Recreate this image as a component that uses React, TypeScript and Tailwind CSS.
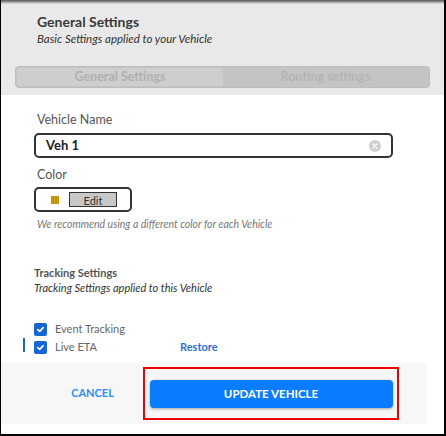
import React from "react";

export default function App() {
  const font = { fontFamily: "Lato, 'Open Sans', sans-serif" };
  return (
    <div
      className="w-[446px] h-[436px] bg-white border-l border-r-2 border-b-2 border-black flex flex-col overflow-hidden"
      style={font}
    >
      {/* Header */}
      <div className="h-[95px] bg-[#e9e9e9] flex flex-col relative">
        <div className="h-[4px] bg-gradient-to-b from-[#555] to-[#e9e9e9]" />
        <div className="pl-[36px] pt-[9px]">
          <div className="text-[14px] leading-[18px] font-bold text-[#3a3a3a]">General Settings</div>
          <div className="text-[11.5px] leading-[14px] italic text-[#333] mt-[1px]">
            Basic Settings applied to your Vehicle
          </div>
        </div>
        <div className="mx-[14px] mt-[20px] h-[22px] rounded-[4px] bg-[#c4c4c4] border border-[#bdbdbd] flex p-[1px]">
          <div className="w-[206px] rounded-[3px] bg-[#cecece] flex items-center justify-center text-[12.5px] font-bold text-[#b0b0b0]">
            General Settings
          </div>
          <div className="flex-1 flex items-center justify-center text-[12.5px] font-bold text-[#b4b4b4]">
            Routing settings
          </div>
        </div>
      </div>

      {/* Body */}
      <div className="flex-1 flex flex-col pl-[33px]">
        <div className="mt-[17px] pl-[3px] text-[12.5px] leading-[16px] text-[#555]">Vehicle Name</div>
        <div className="mt-[5px] w-[359px] h-[25px] border-2 border-[#333] rounded-[5px] flex items-center pl-[10px] pr-[10px]">
          <span className="text-[13px] font-bold text-[#222] flex-1">Veh 1</span>
          <span className="w-[12px] h-[12px] rounded-full bg-[#cfcfcf] flex items-center justify-center">
            <svg width="6" height="6" viewBox="0 0 6 6">
              <path d="M1 1L5 5M5 1L1 5" stroke="white" strokeWidth="1.4" strokeLinecap="round" />
            </svg>
          </span>
        </div>
        <div className="mt-[9px] pl-[3px] text-[12.5px] leading-[16px] text-[#555]">Color</div>
        <div className="mt-[4px] w-[98px] h-[25px] border-2 border-[#333] rounded-[5px] flex items-center pl-[15px]">
          <span className="w-[8px] h-[8px] bg-[#c4960c]" />
          <span className="ml-[10px] w-[48px] h-[15px] bg-[#c8c8c8] border border-[#333] flex items-center justify-center text-[11px] leading-none text-[#333] pt-[2px]">
            Edit
          </span>
        </div>
        <div className="mt-[6px] pl-[3px] text-[10.5px] leading-[13px] italic text-[#777]">
          We recommend using a different color for each Vehicle
        </div>

        <div className="mt-[35px] text-[11px] leading-[13px] font-bold text-[#555]">Tracking Settings</div>
        <div className="mt-[2px] text-[11px] leading-[14px] italic text-[#333]">
          Tracking Settings applied to this Vehicle
        </div>

        <div className="mt-[26px] flex items-center h-[16px]">
          <Check />
          <span className="ml-[8px] text-[11px] text-[#666]">Event Tracking</span>
        </div>
        <div className="mt-[2px] flex items-center h-[16px] relative">
          <span className="absolute left-[-11px] top-[-1px] w-[2px] h-[14px] bg-[#1565d8]" />
          <Check />
          <span className="ml-[8px] w-[125px] text-[11px] text-[#666]">Live ETA</span>
          <span className="text-[11px] font-bold text-[#2f6fd6]">Restore</span>
        </div>
      </div>

      {/* Footer */}
      <div className="h-[61px] w-[425px] bg-[#f7f7f7] flex items-center mb-[10px]">
        <div className="w-[142px] flex justify-center pl-[42px] text-[11px] font-bold text-[#2b8df7]">
          <span className="mr-[1px]">CANCEL</span>
        </div>
        <div className="w-[256px] h-[53px] border-2 border-[#e00] flex items-center justify-center">
          <div className="w-[243px] h-[28px] rounded-[4px] bg-[#0a7cff] shadow-[0_1px_3px_rgba(0,0,0,0.35)] flex items-center justify-center text-[11.5px] font-bold text-white">
            UPDATE VEHICLE
          </div>
        </div>
      </div>
    </div>
  );
}

function Check() {
  return (
    <span className="w-[13px] h-[13px] rounded-[2px] bg-[#1565d8] flex items-center justify-center">
      <svg width="9" height="9" viewBox="0 0 9 9">
        <path d="M1.8 4.6L3.7 6.4L7.2 2.6" stroke="white" strokeWidth="1.6" fill="none" strokeLinecap="round" strokeLinejoin="round" />
      </svg>
    </span>
  );
}
